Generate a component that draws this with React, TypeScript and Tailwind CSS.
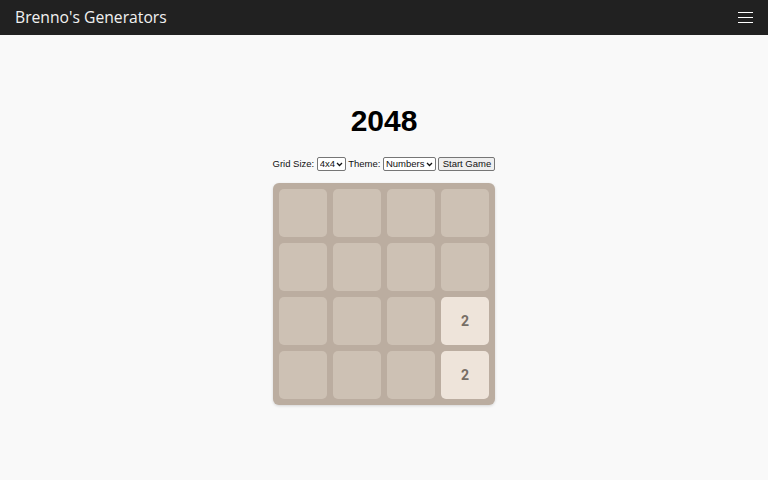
import { useState } from "react";

const tiles = [
  [0, 0, 0, 0],
  [0, 0, 0, 0],
  [0, 0, 0, 2],
  [0, 0, 0, 2],
];

function Tile({ value }: { value: number }) {
  if (!value) {
    return <div className="w-12 h-12 rounded-[5px] bg-[#cdc1b4]" />;
  }
  return (
    <div className="w-12 h-12 rounded-[5px] bg-[#eee4da] flex items-center justify-center text-[#776e65] font-bold text-[14px] font-['Roboto',sans-serif]">
      {value}
    </div>
  );
}

function Picker({
  value,
  options,
  onChange,
  width,
}: {
  value: string;
  options: string[];
  onChange: (v: string) => void;
  width: string;
}) {
  return (
    <span
      className={`inline-flex items-center h-[14px] border border-[#767676] rounded-[2px] bg-white pr-[2px] ${width}`}
    >
      <select
        value={value}
        onChange={(e) => onChange(e.target.value)}
        className="appearance-none bg-transparent outline-none text-[9.5px] leading-[12px] pl-[2px] flex-1 min-w-0"
      >
        {options.map((o) => (
          <option key={o}>{o}</option>
        ))}
      </select>
      <svg width="7" height="5" viewBox="0 0 7 5" className="shrink-0">
        <polyline points="1,1 3.5,3.5 6,1" fill="none" stroke="#111" strokeWidth="1.3" />
      </svg>
    </span>
  );
}

export default function App() {
  const [size, setSize] = useState("4x4");
  const [theme, setTheme] = useState("Numbers");

  return (
    <div className="min-h-screen bg-[#f9f9f9] font-['Liberation_Sans',Arial,sans-serif]">
      {/* top bar */}
      <header className="h-[35px] bg-[#212121] flex items-center justify-between pl-[15px] pr-[15px]">
        <span className="text-[#f1f1f1] text-[15.7px] font-['Open_Sans',sans-serif]">
          Brenno's Generators
        </span>
        <button className="flex flex-col gap-[3.5px] w-[15px]">
          <span className="h-[1.5px] bg-white block" />
          <span className="h-[1.5px] bg-white block" />
          <span className="h-[1.5px] bg-white block" />
        </button>
      </header>

      <main className="flex flex-col items-center pt-[68px]">
        <h1 className="text-[30px] leading-[36px] font-bold text-black">2048</h1>

        <div className="mt-[18px] flex items-center gap-[2.5px] text-[9.5px] text-[#111] h-[14px]">
          <label>Grid Size:</label>
          <Picker value={size} onChange={setSize} options={["3x3", "4x4", "5x5"]} width="w-[29px]" />
          <label>Theme:</label>
          <Picker value={theme} onChange={setTheme} options={["Numbers", "Letters"]} width="w-[53px]" />
          <button className="h-[14px] w-[57px] text-[9.5px] leading-[12px] border border-[#767676] rounded-[2px] bg-[#efefef]">
            Start Game
          </button>
        </div>

        <div className="mt-[12px] bg-[#bbada0] rounded-[6px] p-[6px] grid grid-cols-4 gap-[6px] shadow-[0_1px_3px_rgba(0,0,0,0.15)]">
          {tiles.flat().map((v, i) => (
            <Tile key={i} value={v} />
          ))}
        </div>
      </main>
    </div>
  );
}
